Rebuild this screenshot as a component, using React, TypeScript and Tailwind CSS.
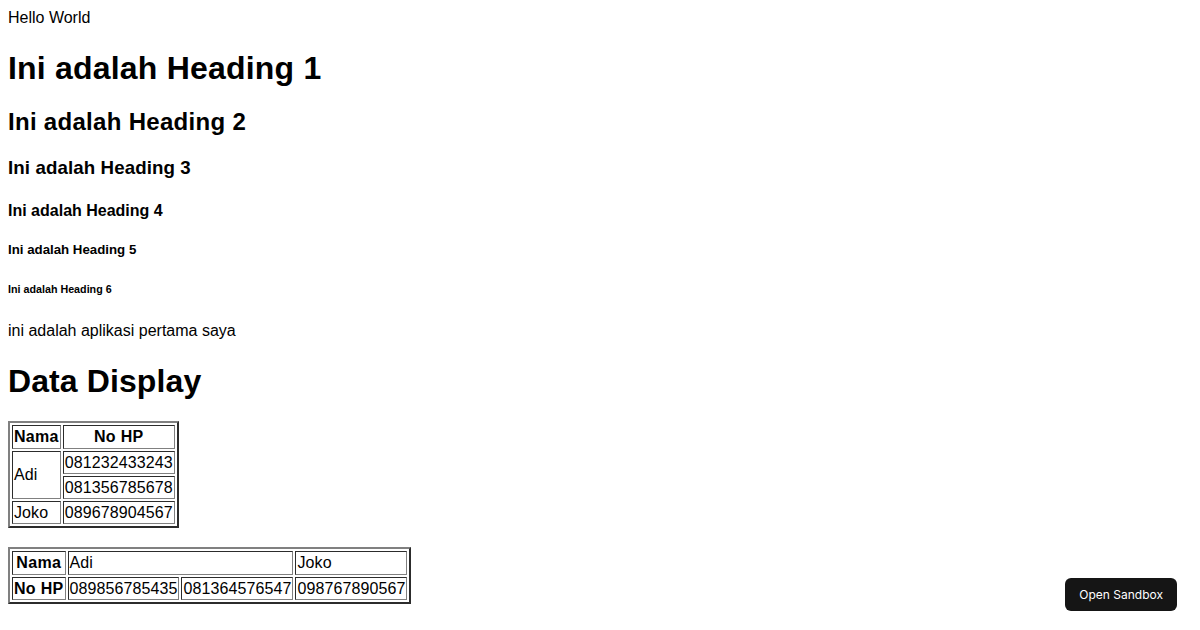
export default function App() {
  const table = "border-separate border-spacing-[2px] border-2 border-[#808080] [border-style:outset]";
  const cell = "border border-[#808080] [border-style:inset] p-px tracking-[0.1px]";
  const head = `${cell} font-bold text-center tracking-[0.3px]`;
  return (
    <div className="m-2 text-base leading-[1.2] text-black bg-white font-['Liberation_Sans',Arial,sans-serif]">
      <div>Hello World</div>
      <h1 className="text-[32px] leading-[1.2] font-bold my-[21.44px] tracking-[0.2px]">Ini adalah Heading 1</h1>
      <h2 className="text-[24px] leading-[1.2] font-bold my-[19.92px] tracking-[0.3px]">Ini adalah Heading 2</h2>
      <h3 className="text-[18.72px] leading-[1.2] font-bold my-[18.72px] tracking-[0.1px]">Ini adalah Heading 3</h3>
      <h4 className="text-[16px] leading-[1.2] font-bold my-[21.28px]">Ini adalah Heading 4</h4>
      <h5 className="text-[13.28px] leading-[1.2] font-bold my-[22.18px]">Ini adalah Heading 5</h5>
      <h6 className="text-[10.72px] leading-[1.2] font-bold my-[24.97px]">Ini adalah Heading 6</h6>
      <p className="my-4">ini adalah aplikasi pertama saya</p>
      <h1 className="text-[32px] leading-[1.2] font-bold my-[21.44px] tracking-[0.1px]">Data Display</h1>

      <table className={table}>
        <tbody>
          <tr>
            <th className={head}>Nama</th>
            <th className={head}>No HP</th>
          </tr>
          <tr>
            <td className={cell} rowSpan={2}>Adi</td>
            <td className={cell}>081232433243</td>
          </tr>
          <tr>
            <td className={cell}>081356785678</td>
          </tr>
          <tr>
            <td className={cell}>Joko</td>
            <td className={cell}>089678904567</td>
          </tr>
        </tbody>
      </table>
      <br />
      <table className={table}>
        <tbody>
          <tr>
            <th className={head}>Nama</th>
            <td className={cell} colSpan={2}>Adi</td>
            <td className={cell}>Joko</td>
          </tr>
          <tr>
            <th className={head}>No HP</th>
            <td className={cell}>089856785435</td>
            <td className={cell}>081364576547</td>
            <td className={cell}>098767890567</td>
          </tr>
        </tbody>
      </table>

      <button className="fixed right-[23px] bottom-[19px] h-[33px] px-[14px] rounded-md bg-[#151515] text-white text-[12px] leading-[normal] font-['Inter',sans-serif]">
        Open Sandbox
      </button>
    </div>
  );
}
